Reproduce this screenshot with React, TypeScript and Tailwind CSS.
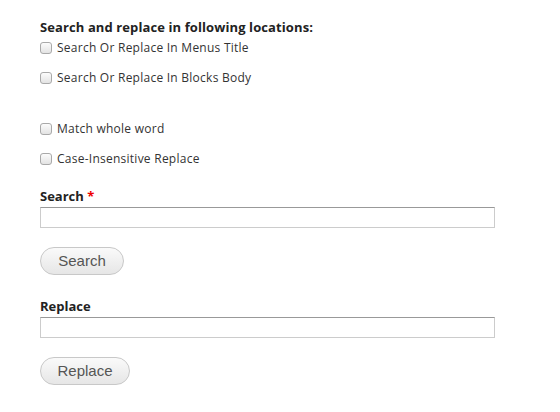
import React from "react";

function Check({ label }: { label: string }) {
  return (
    <label className="flex items-center h-[14px]">
      <span className="w-[12px] h-[12px] rounded-[3px] border border-[#a9a9a9] bg-gradient-to-b from-[#fcfcfc] to-[#e3e3e3] shrink-0" />
      <span className="ml-[5px] text-[12px] tracking-[0.25px] text-[#333] leading-none">{label}</span>
    </label>
  );
}

export default function App() {
  return (
    <div className="w-[560px] h-[412px] bg-white pl-[40px] pt-[19px]" style={{ fontFamily: '"Open Sans", "DejaVu Sans", sans-serif' }}>
      <div className="text-[13px] font-bold text-[#222] leading-[16px] tracking-[0.1px]">Search and replace in following locations:</div>
      <div className="mt-[6px] flex flex-col gap-[16px]">
        <Check label="Search Or Replace In Menus Title" />
        <Check label="Search Or Replace In Blocks Body" />
      </div>
      <div className="mt-[37px] flex flex-col gap-[16px]">
        <Check label="Match whole word" />
        <Check label="Case-Insensitive Replace" />
      </div>
      <div className="mt-[22px] text-[13px] font-bold text-[#222] leading-[16px]">
        Search <span className="text-[#e00]">*</span>
      </div>
      <div className="mt-[3px] w-[455px] h-[21px] border border-[#ccc] border-t-[#999] bg-white" />
      <button className="mt-[19px] w-[84px] h-[28px] rounded-[20px] border border-[#c8c8c8] bg-gradient-to-b from-[#fafafa] to-[#e6e6e6] text-[15px] text-[#555] block" style={{ fontFamily: '"Liberation Sans", Arial, sans-serif' }}>
        Search
      </button>
      <div className="mt-[23px] text-[13px] font-bold text-[#222] leading-[16px]">Replace</div>
      <div className="mt-[3px] w-[455px] h-[21px] border border-[#ccc] border-t-[#999] bg-white" />
      <button className="mt-[19px] w-[90px] h-[28px] rounded-[20px] border border-[#c8c8c8] bg-gradient-to-b from-[#fafafa] to-[#e6e6e6] text-[15px] text-[#555] block" style={{ fontFamily: '"Liberation Sans", Arial, sans-serif' }}>
        Replace
      </button>
    </div>
  );
}
